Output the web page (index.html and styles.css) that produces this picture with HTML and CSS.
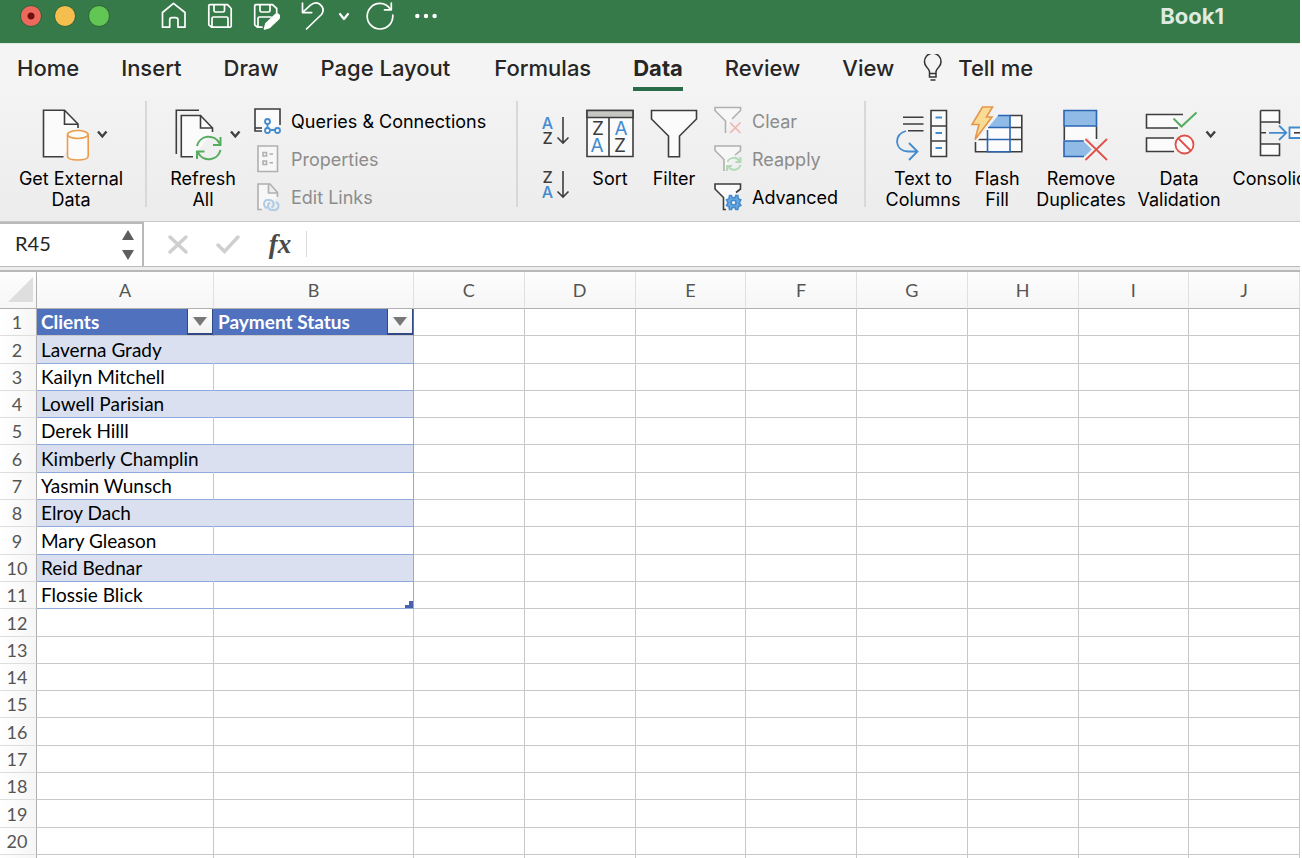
FILE: index.html
```html
<!DOCTYPE html>
<html lang="en">
<head>
<meta charset="utf-8">
<title>Book1</title>
<link rel="stylesheet" href="styles.css">
</head>
<body>
<header class="titlebar">
  <div class="lights">
    <button class="light red" aria-label="Close"></button>
    <button class="light yellow" aria-label="Minimise"></button>
    <button class="light green" aria-label="Zoom"></button>
  </div>
  <div class="quick">
    <button aria-label="Home"><svg width="28" height="32" viewBox="160 0 28 32"><path d="M162.500 12.500L173.500 3.300L185 12.500V27.200H178V20Q178 17.700 175.500 17.700H172Q169.700 17.700 169.700 20V27.200H162.500Z"/></svg></button>
    <button aria-label="Save"><svg width="28" height="32" viewBox="206 0 28 32"><path d="M208.800 6Q208.800 4.700 210 4.700H227.500L231.200 8.500V25.800Q231.200 27.200 229.800 27.200H211.500L208.800 24.800ZM214 4.700V10.500Q214 12 215.500 12H223Q224.500 12 224.500 10.500V4.700M212 27.200V18.500Q212 17 213.500 17H226.500Q228 17 228 18.500V27.200"/></svg></button>
    <button aria-label="Save as"><svg width="28" height="32" viewBox="252 0 28 32"><path d="M262 27.200H257.300L254.700 24.800V6Q254.700 4.700 256 4.700H272.500L276.700 8.500V13M260 4.700V10.500Q260 12 261.500 12H268.500Q270 12 270 10.500V4.700M258 27.200V18.500Q258 17 259.500 17H271"/><path class="fill" d="M264.500 29L266 23.500L275.500 14.600Q277.500 13.500 279 15.200Q280 17 278.700 18.600L269.500 27.400Z"/></svg></button>
    <button aria-label="Undo"><svg width="28" height="32" viewBox="300 0 28 32"><path d="M302.500 3V12.600H311.700M302.900 12.200L310.500 5.200Q315 1.300 319.500 4Q325.500 8.500 321.500 14.500L306.500 29"/></svg></button>
    <button aria-label="Undo history"><svg width="14" height="32" viewBox="337 0 14 32"><path class="bold" d="M340 14L344 19L348 14"/></svg></button>
    <button aria-label="Redo"><svg width="32" height="32" viewBox="364 0 32 32"><path d="M391.300 3V9.800H384.500M390.500 9.500Q387 3.400 379.800 3.400A12.800 12.800 0 1 0 392.800 16V15"/></svg></button>
    <button aria-label="More"><svg width="28" height="32" viewBox="412 0 28 32"><g class="dots"><circle cx="417.300" cy="16" r="2.200"/><circle cx="426" cy="16" r="2.200"/><circle cx="434.600" cy="16" r="2.200"/></g></svg></button>
  </div>
  <h1 class="doc-title">Book1</h1>
</header>

<nav class="tabs">
  <a href="#home">Home</a>
  <a href="#insert">Insert</a>
  <a href="#draw">Draw</a>
  <a href="#layout">Page Layout</a>
  <a href="#formulas">Formulas</a>
  <a href="#data" class="active">Data</a>
  <a href="#review">Review</a>
  <a href="#view">View</a>
  <a href="#tell" class="tell"><svg width="20" height="28" viewBox="923 54 20 28"><path d="M929.500 73.500V71.500Q929 69.500 927 67.500A8.300 8.300 0 1 1 938.500 67.500Q936.500 69.500 936 71.500V77H929.500V73.500H936M930.500 80H935.500"/></svg>Tell me</a>
</nav>

<section class="ribbon" aria-label="Data">
  <div class="group g-external">
    <button class="big w-external"><svg width="106" height="62" viewBox="18 104 106 62"><path class="page" d="M63.500 156.800H43.500V110.300H64.500L78 124V128"/><path class="ink" d="M64.500 110.300V124.300H78"/><path class="page orange" d="M67.500 134.500V156Q67.500 160 77.800 160T88.200 156V134.500"/><ellipse class="page orange" cx="77.800" cy="134.500" rx="10.300" ry="4"/><path class="chev" d="M98 131.500L102.300 136.500L106.500 131.500"/></svg><span>Get External<br>Data</span></button>
  </div>
  <div class="group g-refresh">
    <button class="big w-refresh"><svg width="76" height="62" viewBox="165 104 76 62"><path class="ink" d="M199 110.300H176.300V154"/><path class="page" d="M193 156.800H181.300V115.500H200.500L212.500 128V132"/><path class="ink" d="M200.500 115.500V128H212.500"/><path class="stroke green-line" d="M197 146A12 12 0 0 1 219.500 143.500M220.500 137V145H213M220.500 150A12 12 0 0 1 198 152.500M197 159V151.500H204.500"/><path class="chev" d="M231 131.500L235.300 136.500L239.500 131.500"/></svg><span>Refresh<br>All</span></button>
    <div class="list">
      <button><svg width="28" height="30" viewBox="253 106 28 30"><path class="page" d="M262 131H255V109H280V125"/><path class="ink" d="M255 128H262"/><g class="stroke blue-line"><path d="M267.500 124V128M270.500 130H275"/><circle class="page blue" cx="267.500" cy="121.500" r="2.500"/><circle class="page blue" cx="267.500" cy="130.500" r="2.500"/><circle class="page blue" cx="277.500" cy="130.500" r="2.500"/></g></svg>Queries &amp; Connections</button>
      <button disabled><svg width="28" height="30" viewBox="253 143 28 30"><path class="dim" d="M258 145H277.500V170.500H258ZM263 151.500H266.500V155H263ZM269.500 153H273M263 160H266.500V163.500H263ZM269.500 161.700H273"/></svg>Properties</button>
      <button disabled><svg width="28" height="30" viewBox="253 180 28 30"><path class="dim" d="M262 207.500H258V182H270L277.500 190.500V195M268.500 182V191H277.500"/><path class="dim-blue" d="M267 206H266.500A4.500 4.500 0 0 1 266.500 198H270A4 4 0 0 1 271.500 205.500M276 200A4.300 4.300 0 0 1 275.500 208H271.500A4 4 0 0 1 270 200.500"/></svg>Edit Links</button>
    </div>
  </div>
  <div class="group g-sort">
    <div class="az">
      <button aria-label="Sort ascending"><svg width="30" height="36" viewBox="541 112 30 36"><text class="letter blue-text" x="547.500" y="129">A</text><text class="letter" x="547.500" y="144">Z</text><path class="ink" d="M563 117V143M557.500 137.500L563 143L568.500 137.500"/></svg></button>
      <button aria-label="Sort descending"><svg width="30" height="36" viewBox="541 166 30 36"><text class="letter" x="547.500" y="183">Z</text><text class="letter blue-text" x="547.500" y="198">A</text><path class="ink" d="M563 171V197M557.500 191.500L563 197L568.500 191.500"/></svg></button>
    </div>
    <button class="big w-sort"><svg width="52" height="62" viewBox="584 104 52 62"><path class="page" d="M587 110.500H633V156.500H587Z"/><path class="head" d="M587 110.500H633V117.500H587Z"/><path class="ink" d="M609 117.500V156.500"/><text class="letter large" x="598" y="135">Z</text><text class="letter large blue-text" x="597" y="152">A</text><text class="letter large blue-text" x="621" y="135">A</text><text class="letter large" x="620" y="152">Z</text></svg><span>Sort</span></button>
    <button class="big w-filter"><svg width="52" height="62" viewBox="648 104 52 62"><path class="page" d="M651.500 110.500H696.500V119L679.500 136V156.800H668.500V136L651.500 119Z"/></svg><span>Filter</span></button>
    <div class="list narrow">
      <button disabled><svg width="28" height="30" viewBox="714 106 28 30"><path class="dim" d="M725.500 133V121L715 110.500V107.500H740.500V110.500L732 119"/><path class="dim-red" d="M730 122.500L740.500 133M740.500 122.500L730 133"/></svg>Clear</button>
      <button disabled><svg width="28" height="30" viewBox="714 143 28 30"><path class="dim" d="M724 170V158.500L715 149.500V145H740.500V149.500L735 154"/><path class="dim-green" d="M727.500 161A6.800 6.800 0 0 1 739.500 160M740.500 156V161H735.500M740.500 164A6.800 6.800 0 0 1 728.500 166M727 170V165H732"/></svg>Reapply</button>
      <button><svg width="28" height="30" viewBox="714 180 28 30"><path class="page" d="M726 207.500H723.500V195.500L715 187V182H740.500V187L736 190.500"/><path class="gear" d="M729.500 193.500H731.500L732.300 195.800H735L735.800 193.500H737.800L738.300 196.800L740.800 197.800L739.300 200.700L740.800 203.500L738.300 204.700L737.800 207.500H735.800L735 205.500H732.300L731.500 207.500H729.500L729 204.700L726.500 203.500L728 200.700L726.500 197.800L729 196.800Z"/><circle class="hub" cx="733.600" cy="200.600" r="2.400"/></svg>Advanced</button>
    </div>
  </div>
  <div class="group g-tools">
    <button class="big w-text"><svg width="74" height="62" viewBox="886 104 74 62"><path class="ink" d="M903 117.300H923.500M903 124H923.500M908 130.700H923.500"/><path class="page" d="M931 110.500H946.500V156.500H931ZM931 126H946.500M931 141H946.500"/><path class="stroke blue-line" d="M935.500 117.500H942M935.500 133H942M935.500 148H942M906 131Q897 133.500 897 142Q898 151 908 151.500H917M909 143L917.500 151.500L909 160"/></svg><span>Text to<br>Columns</span></button>
    <button class="big w-flash"><svg width="54" height="62" viewBox="970 104 54 62"><path class="sheet-fill" d="M975.500 139.500L987 127L998 115.500H1021.800V151.800H975.500Z"/><path class="blue-area" d="M988 127.500L998 115.500H1010V127.500Z"/><path class="ink" d="M1010 115.500H1021.800V151.800H975.500V142M975.500 139.500H987M1010 139.500H1021.800M1010 127.500H1021.800"/><path class="stroke navy-line" d="M988 127.500H1010M987.500 130V151.800H1010V115.500H998M987.500 139.500H1010"/><path class="bolt-halo" d="M982.500 107H992.500L986.500 117H992L975 139.500L979 124.500H972Z"/><path class="bolt" d="M982.500 107H992.500L986.500 117H992L975 139.500L979 124.500H972Z"/></svg><span>Flash<br>Fill</span></button>
    <button class="big w-remove"><svg width="90" height="62" viewBox="1036 104 90 62"><path class="sheet-fill" d="M1064.500 126H1096.500V141H1064.500Z"/><path class="blue-area" d="M1064 141H1085L1092 149.500L1085 156.500H1064Z"/><path class="blue-box" d="M1064 110.500H1096.500V126H1064Z"/><path class="navy-line" d="M1084 141H1064V156.500H1084"/><path class="halo" d="M1085.500 139L1107 160M1107 139L1085.500 160"/><path class="ink" d="M1096.500 126.500V139M1064.300 126.500V140"/><path class="stroke red-line" d="M1085.500 139L1107 160M1107 139L1085.500 160"/></svg><span>Remove<br>Duplicates</span></button>
    <button class="big w-valid"><svg width="84" height="62" viewBox="1137 104 84 62"><path class="page" d="M1183 114.500H1146.500V128H1178M1174 138H1146.500V151.500H1174"/><path class="stroke green-line" d="M1173.500 118.500L1181.500 126.500L1196.500 112.500"/><circle class="page red-line" cx="1184.500" cy="144.500" r="9"/><path class="stroke red-line" d="M1178 138L1191 151"/><path class="chev" d="M1206.500 131.500L1210.700 136.500L1215 131.500"/></svg><span>Data<br>Validation</span></button>
    <button class="big w-cons"><svg width="98" height="62" viewBox="1234 104 98 62"><path class="page" d="M1260.500 110.500H1279.500V122H1260.500M1260.500 110.500V155.500H1279.500V144H1260.500M1279.500 122V124M1260.500 132.800H1266"/><path class="stroke blue-line" d="M1269 132.800H1286M1279 125.500L1286.300 132.800L1279 140"/><path class="page blue" d="M1289.500 127.500H1308V138H1289.500Z"/><path class="ink" d="M1294 132.800H1303"/></svg><span>Consolidate</span></button>
  </div>
</section>

<section class="formula-bar">
  <div class="namebox">
    <input aria-label="Name box" value="R45">
    <svg width="14" height="32" viewBox="0 0 14 32"><path d="M1 11H13L7 1ZM1 21H13L7 31Z"/></svg>
  </div>
  <button class="fx-btn" aria-label="Cancel"><svg width="24" height="24" viewBox="0 0 24 24"><path d="M4 5L20 20M20 5L4 20"/></svg></button>
  <button class="fx-btn" aria-label="Enter"><svg width="26" height="24" viewBox="0 0 26 24"><path d="M3 13L9.500 19.500L23 5"/></svg></button>
  <button class="fx">fx</button>
  <input class="formula" aria-label="Formula">
</section>

<main class="sheet">
  <table>
    <colgroup><col class="c-num"><col class="c-a"><col class="c-b"><col span="8"></colgroup>
    <thead>
      <tr><th class="corner"><svg width="26" height="26" viewBox="0 0 26 26"><path d="M26 0V25H1Z"/></svg></th><th>A</th><th>B</th><th>C</th><th>D</th><th>E</th><th>F</th><th>G</th><th>H</th><th>I</th><th>J</th></tr>
    </thead>
    <tbody id="rows"></tbody>
  </table>
</main>
<script src="script.js"></script>
</body>
</html>
```

FILE: styles.css
```css
* { box-sizing: border-box; }
body {
  margin: 0;
  padding-right: 2px;
  height: 100vh;
  overflow: hidden;
  display: flex;
  flex-direction: column;
  background: #fff;
  color: #000;
  font-family: Inter, "Liberation Sans", sans-serif;
  font-size: 18px;
}
button { border: 0; padding: 0; margin: 0; background: none; font: inherit; color: inherit; }
input { border: 0; margin: 0; outline: 0; background: none; font: inherit; color: inherit; }
svg { display: block; flex: none; }

/* Title bar */
.titlebar { display: flex; align-items: center; flex: none; height: 43px; padding: 0 76px 11px 20px; background: #377a49; }
.lights { display: flex; gap: 12px; }
.light { width: 22px; height: 22px; border-radius: 50%; border: 1px solid #2d6238; }
.red { background: radial-gradient(circle, #700f0b 3px, #ed695e 4px); }
.yellow { background: #f5bf4f; }
.green { background: #62c655; }
.quick { display: flex; gap: 18px; margin-left: 50px; }
.quick button:nth-child(4) { margin-left: 2px; }
.quick button:nth-child(5) { margin: 0 -5px 0 -9px; }
.quick button:nth-child(6) { margin-right: -2px; }
.quick path { fill: none; stroke: #fff; stroke-width: 1.7; stroke-linejoin: round; stroke-linecap: round; }
.quick .bold { stroke-width: 2.2; }
.quick .fill, .quick .dots { fill: #fff; }
.doc-title { margin: 0 0 0 auto; font-size: 22px; line-height: 28px; font-weight: 700; color: #dfebe1; }

/* Ribbon tabs */
.tabs { display: flex; flex: none; height: 53px; padding: 8px 17px 0; background: #f4f4f4; border-top: 1px solid #dce8de; }
.tabs a { height: 39px; margin-right: 42px; line-height: 32px; font-size: 22px; font-weight: 500; color: #262626; text-decoration: none; white-space: nowrap; }
.tabs a:nth-child(4) { margin-right: 44px; }
.tabs .active { font-weight: 700; border-bottom: 4px solid #2a6c48; }
.tabs .tell { display: flex; align-items: center; gap: 15px; height: 32px; margin-left: -13px; }
.tabs path { fill: none; stroke: #333; stroke-width: 1.5; }

/* Ribbon */
.ribbon { display: flex; flex: none; height: 126px; padding-top: 5px; overflow: hidden; background: linear-gradient(#f3f3f3, #ececec); border-bottom: 1px solid #c8c8c8; }
.group { display: flex; flex: none; align-items: flex-start; height: 106px; }
.group + .group { border-left: 2px solid #d8d8d8; }
.g-external { width: 145px; padding-left: 18px; }
.g-refresh { width: 371px; padding-left: 18px; }
.g-sort { width: 348px; padding-left: 23px; }
.g-tools { padding-left: 20px; }
.big { display: flex; flex: none; flex-direction: column; align-items: center; padding-top: 3px; line-height: 21px; }
.big span { margin-top: 2px; white-space: nowrap; }
.w-external { width: 106px; }
.w-refresh { width: 76px; }
.w-sort { width: 52px; margin-left: 13px; }
.w-filter { width: 52px; margin-left: 12px; }
.w-text { width: 74px; }
.w-flash { width: 54px; margin-left: 10px; }
.w-remove { width: 90px; margin-left: 12px; }
.w-valid { width: 84px; margin-left: 11px; }
.w-cons { width: 98px; margin-left: 13px; }
.list { display: flex; flex-direction: column; margin: 1px 0 0 12px; }
.list.narrow { margin-left: 14px; }
.list button { display: flex; align-items: center; gap: 10px; height: 38px; white-space: nowrap; }
.list button:disabled { color: #8c8c8c; }
.az { display: flex; flex-direction: column; gap: 18px; padding-top: 11px; }

.ribbon path, .ribbon ellipse, .ribbon circle { fill: none; stroke-width: 1.6; }
.ribbon .ink { stroke: #3d3d3d; }
.ribbon .page { fill: #fbfbfb; stroke: #3d3d3d; }
.ribbon .sheet-fill { fill: #fbfbfb; }
.ribbon .head { fill: #c6c6c2; stroke: #3d3d3d; }
.ribbon .orange { stroke: #ee9b4a; }
.ribbon .green-line { stroke: #55ad60; stroke-width: 2; }
.ribbon .blue, .ribbon .blue-line, .ribbon .blue-line path { stroke: #438bcf; stroke-width: 1.8; }
.ribbon .navy-line { stroke: #2b66b4; }
.ribbon .red-line { stroke: #df5148; stroke-width: 1.8; }
.ribbon .blue-area { fill: #8fbbe6; }
.ribbon .blue-box { fill: #8fbbe6; stroke: #2b66b4; }
.ribbon .halo { stroke: #f1f1f1; stroke-width: 6; }
.ribbon .bolt-halo { fill: #f1f1f1; stroke: #f1f1f1; stroke-width: 6; }
.ribbon .bolt { fill: #f8dc95; stroke: #e5964b; }
.ribbon .dim { fill: #f7f7f7; stroke: #b0b0b0; }
.ribbon .dim-blue { stroke: #b0cce6; stroke-width: 2; }
.ribbon .dim-red { stroke: #efb4af; }
.ribbon .dim-green { stroke: #b3d9b6; stroke-width: 2; }
.ribbon .gear { fill: #6aa6de; stroke: #438bcf; }
.ribbon .hub { fill: #f4f4f4; stroke: #438bcf; }
.ribbon .chev { stroke: #404040; stroke-width: 2.4; }
.letter { font-size: 16px; font-weight: 500; text-anchor: middle; fill: #3d3d3d; }
.letter.large { font-size: 19px; font-weight: 400; }
.letter.blue-text { fill: #438bcf; }

/* Formula bar */
.formula-bar { display: flex; align-items: center; flex: none; height: 50px; background: #fff; border-bottom: 2px solid #b8b8b8; box-shadow: inset 0 -3px #ededed, inset 0 -4px #bcbcbc; padding-bottom: 4px; }
.namebox { display: flex; align-items: center; width: 144px; height: 44px; padding: 0 7px 0 15px; border-top: 2px solid #b9b9b9; border-right: 2px solid #b9b9b9; }
.namebox input { flex: 1; min-width: 0; padding: 0 0 4px; font-family: Lato, sans-serif; font-size: 20px; color: #262626; }
.namebox path { fill: #5e5e5e; }
.fx-btn { margin-left: 22px; }
.fx-btn + .fx-btn { margin-left: 25px; }
.fx-btn path { fill: none; stroke: #cfcfcf; stroke-width: 3.5; stroke-linecap: round; }
.fx { width: 38px; margin-left: 20px; font: italic bold 27px/30px "Liberation Serif", serif; color: #4a4a4a; }
.formula { flex: 1; height: 26px; margin-left: 7px; padding: 0 8px; border-left: 1px solid #dadada; }

/* Grid */
.sheet { flex: 1; min-height: 0; overflow: hidden; }
table { width: 100%; table-layout: fixed; border-collapse: separate; border-spacing: 0; font-family: Lato, sans-serif; font-size: 18px; line-height: 24px; }
.c-num { width: 37px; }
.c-a { width: 177px; }
.c-b { width: 200px; }
th, td { padding: 0; border-right: 1px solid #c8c8c8; border-bottom: 1px solid #c8c8c8; white-space: nowrap; }
thead th { height: 37px; font-weight: 400; color: #555; background: linear-gradient(#fdfdfd, #f6f6f6); border-right-color: #e0e0e0; border-bottom-color: #b0b0b0; }
thead .corner, tbody th { border-right-color: #b0b0b0; }
.corner svg { margin-left: 7px; fill: #dedede; }
tbody th { padding-right: 2px; font-weight: 400; color: #555; background: linear-gradient(90deg, #fff, #f6f6f6); border-bottom-color: #dedede; }
tbody tr { height: 27px; }
tbody tr:nth-child(10n + 2), tbody tr:nth-child(10n + 6), tbody tr:nth-child(10n + 9) { height: 28px; }
td { padding-left: 4px; font-size: 19px; }
.record td:nth-child(-n + 3) { border-bottom-color: #8ea9db; }
.record td:nth-child(3) { border-right-color: #8ea9db; }
.band td:nth-child(-n + 3) { background: #dae0f0; }
.band td:nth-child(2) { border-right-color: #dae0f0; }
.fields td:nth-child(-n + 3) { background: #4f71be; border-right-color: #4f71be; color: #fff; font-weight: 700; }
.field { display: flex; align-items: center; justify-content: space-between; height: 26px; }
.drop { display: flex; align-items: center; width: 26px; height: 26px; padding: 2px 5px 0; background: linear-gradient(#fff, #f1f1f1); border: solid #2f4a86; border-width: 0 1px 2px; }
.drop svg { fill: #777; }
.last td:nth-child(3) { background: linear-gradient(#4a5fae, #4a5fae) right bottom / 8px 3px no-repeat, linear-gradient(#4a5fae, #4a5fae) right bottom / 4px 7px no-repeat; }
```

FILE: script.js
```js
const clients = ["Laverna Grady", "Kailyn Mitchell", "Lowell Parisian", "Derek Hilll", "Kimberly Champlin",
  "Yasmin Wunsch", "Elroy Dach", "Mary Gleason", "Reid Bednar", "Flossie Blick"];
const blank = "<td></td>".repeat(8);
const field = (name) => `<td><div class="field">${name}<button class="drop" aria-label="Filter ${name}">` +
  `<svg width="14" height="10" viewBox="0 0 14 10"><path d="M0 0H14L7 9Z"/></svg></button></div></td>`;

let html = `<tr class="fields"><th>1</th>${field("Clients")}${field("Payment Status")}${blank}</tr>`;
for (let n = 2; n <= 20; n++) {
  const name = clients[n - 2];
  const kinds = name ? ["record", n % 2 ? "" : "band", n === 11 ? "last" : ""].join(" ").trim() : "";
  html += `<tr class="${kinds}"><th>${n}</th><td>${name || ""}</td><td></td>${blank}</tr>`;
}
html += `<tr><th></th><td></td><td></td>${blank}</tr>`;
document.getElementById("rows").innerHTML = html;
```
